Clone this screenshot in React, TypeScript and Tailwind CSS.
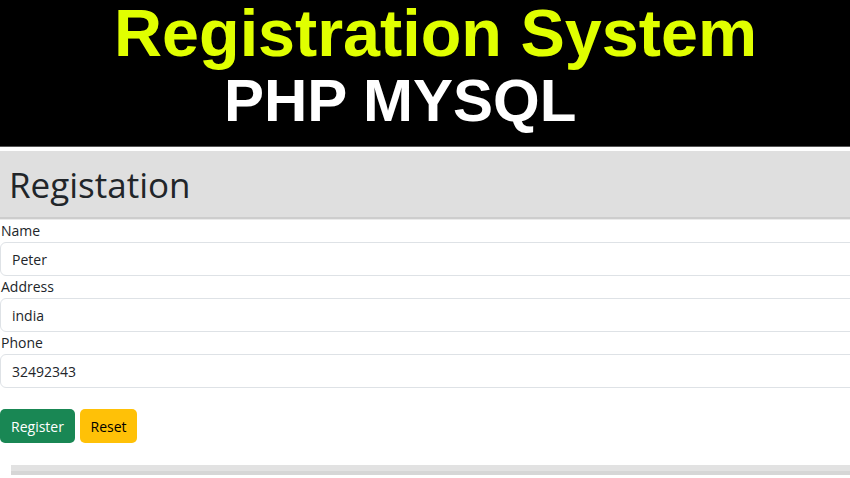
import React from 'react';

// 등록 폼 화면
const fields = [
  { label: 'Name', value: 'Peter' },
  { label: 'Address', value: 'india' },
  { label: 'Phone', value: '32492343' },
];

export default function App() {
  return (
    <div className="w-[850px] h-[478px] overflow-hidden bg-white font-['Open_Sans',sans-serif] text-[#212529]">
      {/* 상단 배너 */}
      <header className="h-[147px] bg-black border-b border-[#555] font-['Liberation_Sans',Arial,sans-serif] font-bold whitespace-nowrap">
        <div className="pl-[114px] text-[66.5px] leading-[66px] text-[#e0ff00]">Registration System</div>
        <div className="pl-[224px] mt-[5px] text-[60px] leading-[60px] text-white">PHP MYSQL</div>
      </header>

      {/* 제목 */}
      <div className="mt-[4px] h-[68px] bg-[#dfdfdf] border-b-2 border-[#cdcdcd] shadow-[0_1px_0_#ebebeb] flex items-center pl-[9px]">
        <h1 className="text-[35px] leading-[44px] font-medium pt-[1px]">Registation</h1>
      </div>

      <form className="flex flex-col mt-px">
        {fields.map((f) => (
          <div key={f.label} className="flex flex-col">
            <label className="text-[14px] leading-[22px] h-[22px] pl-px">{f.label}</label>
            <input
              defaultValue={f.value}
              className="w-[870px] h-[34px] border border-[#dee2e6] rounded-[6px] pl-[11px] text-[14px] text-[#212529] outline-none"
            />
          </div>
        ))}

        <div className="flex gap-[5px] mt-[21px]">
          <button type="button" className="h-[34px] w-[75px] rounded-[5px] bg-[#198754] text-white text-[14px]">
            Register
          </button>
          <button type="button" className="h-[34px] w-[57px] rounded-[5px] bg-[#ffc107] text-black text-[14px]">
            Reset
          </button>
        </div>
      </form>

      {/* 하단 바 */}
      <div className="ml-[11px] mt-[22px] h-[10px] bg-[#e2e2e2] border-b-4 border-[#d6d6d6]" />
    </div>
  );
}
